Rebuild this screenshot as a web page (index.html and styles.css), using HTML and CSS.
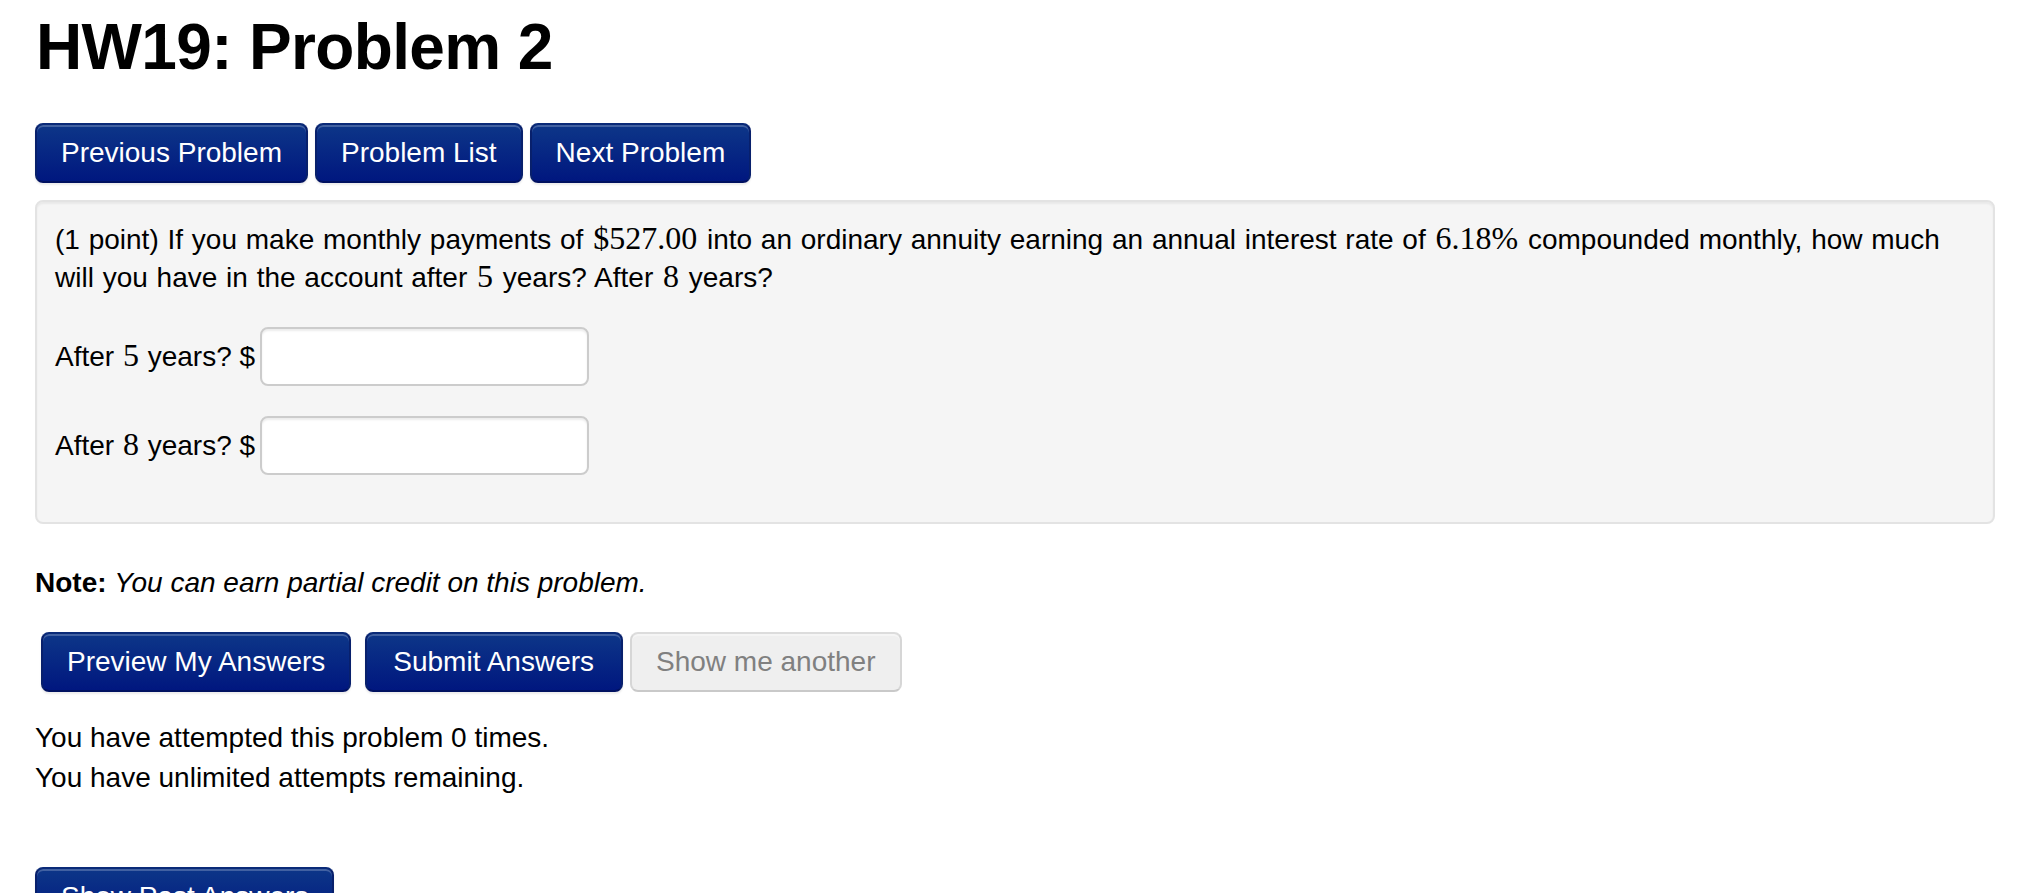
FILE: index.html
```html
<!DOCTYPE html>
<html lang="en">
<head>
<meta charset="utf-8">
<title>HW19: Problem 2</title>
<link rel="stylesheet" href="styles.css">
</head>
<body>
<div class="page">
  <h1 class="title">HW19: Problem 2</h1>
  <div class="nav">
    <a class="btn btn-primary">Previous Problem</a>
    <a class="btn btn-primary">Problem List</a>
    <a class="btn btn-primary">Next Problem</a>
  </div>
  <div class="well">
    <p class="question">(1 point) If you make monthly payments of <span class="math">$527.00</span> into an ordinary annuity earning an annual interest rate of <span class="math">6.18%</span> compounded monthly, how much will you have in the account after <span class="math">5</span> years? After <span class="math">8</span> years?</p>
    <div class="answer-row">
      <label class="answer-label">After <span class="math">5</span> years? $</label>
      <input class="answer-input" type="text">
    </div>
    <div class="answer-row">
      <label class="answer-label">After <span class="math">8</span> years? $</label>
      <input class="answer-input" type="text">
    </div>
  </div>
  <p class="note"><b>Note:</b> <i>You can earn partial credit on this problem.</i></p>
  <div class="actions">
    <button class="btn btn-primary btn-preview">Preview My Answers</button>
    <button class="btn btn-primary btn-submit">Submit Answers</button>
    <button class="btn btn-disabled" disabled>Show me another</button>
  </div>
  <p class="attempts">You have attempted this problem 0 times.<br>You have unlimited attempts remaining.</p>
  <div class="past">
    <button class="btn btn-primary">Show Past Answers</button>
  </div>
</div>
</body>
</html>
```

FILE: styles.css
```css
html, body {
  margin: 0;
  padding: 0;
  background: #ffffff;
}

body {
  font-family: "Liberation Sans", Arial, Helvetica, sans-serif;
  font-size: 28px;
  line-height: 40px;
  color: #000000;
  overflow: hidden;
  height: 893px;
}

.page {
  padding: 0 37px 0 35px;
}

.title {
  margin: 7px 0 36px 1px;
  font-size: 64px;
  line-height: 80px;
  font-weight: bold;
  letter-spacing: -0.65px;
}

.nav {
  display: flex;
  gap: 7px;
}

.btn {
  display: inline-block;
  box-sizing: border-box;
  height: 60px;
  padding: 8px 24px;
  font-family: "Liberation Sans", Arial, Helvetica, sans-serif;
  font-size: 28px;
  line-height: 40px;
  border-radius: 8px;
  border: 2px solid;
  text-decoration: none;
  white-space: nowrap;
  cursor: pointer;
}

.btn-primary {
  color: #ffffff;
  background: linear-gradient(to bottom, #0d3688 0%, #00177f 100%);
  border-color: #0a2a78 #08206c #001160;
  box-shadow: inset 0 2px 0 rgba(255, 255, 255, 0.22), 0 2px 2px rgba(0, 0, 0, 0.08);
}

.btn-disabled {
  color: #808080;
  background: #efefef;
  border-color: #dcdcdc #d6d6d6 #c9c9c9;
  box-shadow: inset 0 2px 0 rgba(255, 255, 255, 0.4);
  cursor: default;
}

.well {
  margin-top: 17px;
  background: #f5f5f5;
  border: 2px solid #e3e3e3;
  border-radius: 8px;
  box-shadow: inset 0 2px 2px rgba(0, 0, 0, 0.05);
  padding: 19px 18px 17px 18px;
}

.question {
  margin: 0 0 30px 0;
  padding-right: 20px;
  line-height: 38px;
  word-spacing: 1px;
}

.math {
  font-family: "Liberation Serif", "Times New Roman", serif;
  font-size: 32px;
  line-height: 1;
  padding: 0 1px;
}

.answer-row {
  display: flex;
  align-items: center;
  height: 59px;
  margin-bottom: 30px;
  line-height: 38px;
}

.answer-input {
  box-sizing: border-box;
  width: 329px;
  height: 59px;
  margin: 0 0 0 5px;
  padding: 8px 12px;
  border: 2px solid #cccccc;
  border-radius: 8px;
  background: #ffffff;
  box-shadow: inset 0 2px 2px rgba(0, 0, 0, 0.075);
  font-family: "Liberation Sans", Arial, sans-serif;
  font-size: 28px;
}

.note {
  margin: 39px 0 0 0;
}

.actions {
  display: flex;
  margin-top: 29px;
  padding-left: 6px;
}

.btn-preview {
  margin-right: 14px;
}

.btn-submit {
  margin-right: 7px;
  padding-left: 26px;
  padding-right: 27px;
}

.attempts {
  margin: 26px 0 0 0;
}

.past {
  margin-top: 69px;
}
```
